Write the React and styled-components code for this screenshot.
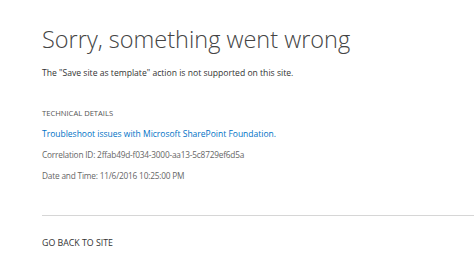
import React from 'react';
import styled, { createGlobalStyle } from 'styled-components';

const GlobalStyle = createGlobalStyle`
	html, body {
		margin: 0;
		padding: 0;
		background: #ffffff;
	}
	body {
		font-family: 'Open Sans', 'Noto Sans', 'Liberation Sans', sans-serif;
		color: #444444;
	}
`;

const Page = styled.main`
	display: flex;
	flex-direction: column;
	align-items: flex-start;
	padding: 24px 0 0 42px;
	width: 432px;
`;

const Title = styled.h1`
	margin: 0;
	font-weight: 300;
	font-size: 23.5px;
	line-height: 30px;
	color: #444444;
`;

const Message = styled.p`
	margin: 13px 0 0;
	font-size: 8.6px;
	line-height: 12px;
	color: #333333;
`;

const Section = styled.section`
	display: flex;
	flex-direction: column;
	gap: 9px;
	margin-top: 28px;
`;

const Label = styled.div`
	font-size: ${(p) => (p.upper ? '7.6px' : '8.3px')};
	letter-spacing: ${(p) => (p.upper ? '0' : '-0.2px')};
	line-height: 12px;
	text-transform: ${(p) => (p.upper ? 'uppercase' : 'none')};
	color: ${(p) => (p.upper ? '#555555' : '#666666')};
`;

const Link = styled.a`
	font-size: 8.5px;
	line-height: 12px;
	color: #0072c6;
	text-decoration: none;
`;

const Divider = styled.hr`
	margin: 33px 0 0;
	border: 0;
	border-top: 1px solid #d6d6d6;
	width: 432px;
`;

const BackLink = styled.a`
	margin-top: 21px;
	font-size: 8.8px;
	line-height: 12px;
	text-transform: uppercase;
	color: #333333;
	text-decoration: none;
`;

export default function App() {
	return (
		<>
			<GlobalStyle />
			<Page>
				<Title>Sorry, something went wrong</Title>
				<Message>The "Save site as template" action is not supported on this site.</Message>
				<Section>
					<Label upper>Technical Details</Label>
					<Link href="#">Troubleshoot issues with Microsoft SharePoint Foundation.</Link>
					<Label>Correlation ID: 2ffab49d-f034-3000-aa13-5c8729ef6d5a</Label>
					<Label>Date and Time: 11/6/2016 10:25:00 PM</Label>
				</Section>
				<Divider />
				<BackLink href="#">Go back to site</BackLink>
			</Page>
		</>
	);
}
